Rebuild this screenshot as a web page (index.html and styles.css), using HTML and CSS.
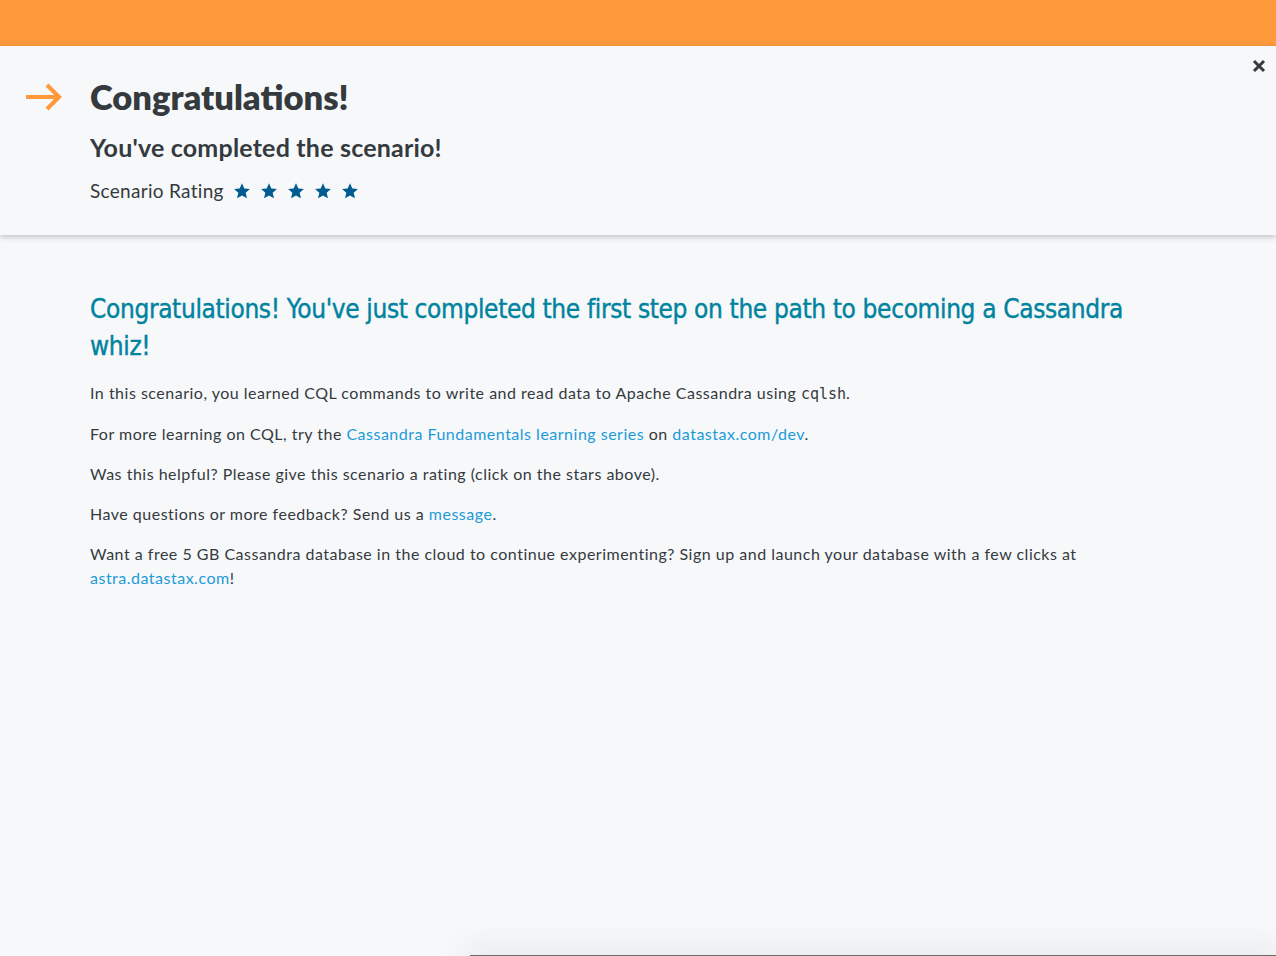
FILE: index.html
```html
<!DOCTYPE html>
<html lang="en">
<head>
<meta charset="utf-8">
<title>Congratulations!</title>
<link rel="stylesheet" href="styles.css">
</head>
<body>
<div class="topbar"></div>
<header class="finish">
  <div class="finish-icon">
    <svg width="38" height="30" viewBox="0 0 38 30" aria-hidden="true">
      <path d="M1 15 H33 M22 3 L34 15 L22 27" fill="none" stroke="#ff9a3c" stroke-width="4.2" stroke-linecap="butt" stroke-linejoin="miter"/>
    </svg>
  </div>
  <div class="finish-body">
    <h1 class="finish-title">Congratulations!</h1>
    <h2 class="finish-sub">You've completed the scenario!</h2>
    <div class="rating">
      <span class="rating-label">Scenario Rating</span>
      <span class="stars">
        <svg class="star" viewBox="0 0 24 24"><path d="M12 1.8l3.1 6.9 7.4.7-5.6 5 1.7 7.4L12 18l-6.6 3.8 1.7-7.4-5.6-5 7.4-.7z"/></svg>
        <svg class="star" viewBox="0 0 24 24"><path d="M12 1.8l3.1 6.9 7.4.7-5.6 5 1.7 7.4L12 18l-6.6 3.8 1.7-7.4-5.6-5 7.4-.7z"/></svg>
        <svg class="star" viewBox="0 0 24 24"><path d="M12 1.8l3.1 6.9 7.4.7-5.6 5 1.7 7.4L12 18l-6.6 3.8 1.7-7.4-5.6-5 7.4-.7z"/></svg>
        <svg class="star" viewBox="0 0 24 24"><path d="M12 1.8l3.1 6.9 7.4.7-5.6 5 1.7 7.4L12 18l-6.6 3.8 1.7-7.4-5.6-5 7.4-.7z"/></svg>
        <svg class="star" viewBox="0 0 24 24"><path d="M12 1.8l3.1 6.9 7.4.7-5.6 5 1.7 7.4L12 18l-6.6 3.8 1.7-7.4-5.6-5 7.4-.7z"/></svg>
      </span>
    </div>
  </div>
  <button class="close" aria-label="Close">
    <svg width="14" height="14" viewBox="0 0 14 14"><path d="M2 2 L12 12 M12 2 L2 12" stroke="#343a3e" stroke-width="3" stroke-linecap="butt"/></svg>
  </button>
</header>
<main class="content">
  <h3 class="lead">Congratulations! You've just completed the first step on the path to becoming a Cassandra whiz!</h3>
  <p class="first">In this scenario, you learned CQL commands to write and read data to Apache Cassandra using <code>cqlsh</code>.</p>
  <p>For more learning on CQL, try the <a href="#">Cassandra Fundamentals learning series</a> on <a href="#">datastax.com/dev</a>.</p>
  <p>Was this helpful? Please give this scenario a rating (click on the stars above).</p>
  <p>Have questions or more feedback? Send us a <a href="#">message</a>.</p>
  <p>Want a free 5 GB Cassandra database in the cloud to continue experimenting? Sign up and launch your database with a few clicks at <a href="#">astra.datastax.com</a>!</p>
</main>
<div class="dock"></div>
</body>
</html>
```

FILE: styles.css
```css
html, body {
  margin: 0;
  padding: 0;
  height: 100%;
}
body {
  background: #f7f8fa;
  font-family: "Lato", "Open Sans", sans-serif;
  color: #343a3e;
  overflow: hidden;
}
.topbar {
  height: 46px;
  background: #ff9a3c;
}
.finish {
  position: relative;
  display: flex;
  background: #f7f8fa;
  height: 189px;
  box-sizing: border-box;
  padding: 30px 0 0 25px;
  box-shadow: 0 2px 6px rgba(0, 0, 0, 0.22);
}
.finish-icon {
  width: 65px;
  padding-top: 6px;
}
.finish-title {
  margin: 0;
  font-size: 34.5px;
  line-height: 41px;
  font-weight: 800;
  color: #343a3e;
}
.finish-sub {
  margin: 15px 0 0;
  font-size: 25px;
  line-height: 30px;
  font-weight: 700;
  letter-spacing: 0.2px;
  color: #343a3e;
}
.rating {
  margin-top: 16px;
  display: flex;
  align-items: center;
  height: 26px;
}
.rating-label {
  font-size: 19px;
  line-height: 26px;
  letter-spacing: 0.3px;
}
.stars {
  display: flex;
  gap: 9px;
  margin-left: 9px;
}
.star {
  width: 18px;
  height: 18px;
  fill: #005b8f;
}
.close {
  position: absolute;
  top: 13px;
  right: 10px;
  border: 0;
  background: none;
  padding: 0;
  width: 14px;
  height: 14px;
  cursor: pointer;
}
.content {
  padding: 56px 140px 0 90px;
}
.lead {
  margin: 0 0 16px;
  font-family: "Liberation Sans Narrow", "DejaVu Sans Condensed", sans-serif;
  font-weight: 400;
  font-size: 26px;
  letter-spacing: -0.36px;
  line-height: 37px;
  color: #00839e;
  -webkit-text-stroke: 0.4px #00839e;
}
.content p {
  margin: 0 0 16px;
  font-size: 16px;
  line-height: 24px;
  letter-spacing: 0.5px;
  color: #343a3e;
}
.content p.first {
  margin-bottom: 17px;
}
.content a {
  color: #1c9bd8;
  text-decoration: none;
}
code {
  font-family: "DejaVu Sans Mono", "Liberation Mono", monospace;
  font-size: 15px;
  line-height: 1;
  letter-spacing: 0;
}
.dock {
  position: fixed;
  left: 470px;
  right: 0;
  bottom: 0;
  height: 1px;
  background: #6b6b6b;
  box-shadow: 0 0 30px 8px rgba(0, 0, 0, 0.08);
}
```
